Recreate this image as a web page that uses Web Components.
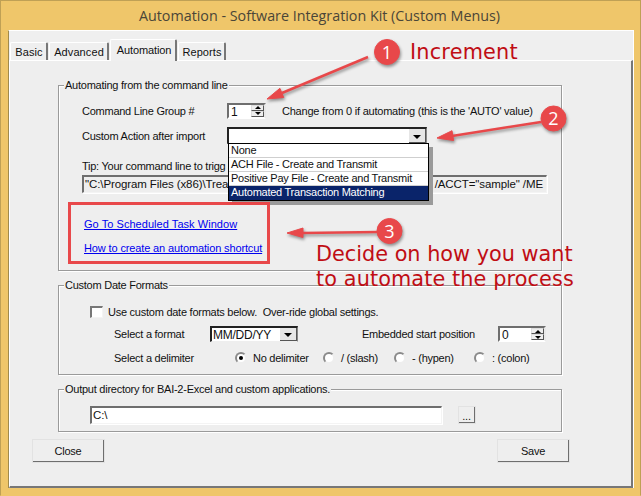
<!DOCTYPE html>
<html>
<head>
<meta charset="utf-8">
<title>Automation</title>
<style>
  html, body { margin: 0; padding: 0; background: #efc66a; }
  body { font: 11px "Liberation Sans", Arial, sans-serif; color: #111; letter-spacing: -.25px; }
</style>
</head>
<body>

<automation-dialog>
  <win-tab slot="tabs" style="width:38px">Basic</win-tab>
  <win-tab slot="tabs" style="width:60px">Advanced</win-tab>
  <win-tab slot="tabs" selected style="width:67px">Automation</win-tab>
  <win-tab slot="tabs" style="width:48px">Reports</win-tab>

  <win-group label="Automating from the command line" style="height:186px">
    <command-line-panel></command-line-panel>
  </win-group>
  <win-group label="Custom Date Formats" style="height:90px;margin-top:14px">
    <date-format-panel></date-format-panel>
  </win-group>
  <win-group label="Output directory for BAI-2-Excel and custom applications." style="height:43px;margin-top:14px">
    <output-panel></output-panel>
  </win-group>
  <dialog-footer></dialog-footer>
</automation-dialog>

<script>
class WinTab extends HTMLElement {
  constructor() {
    super();
    this.attachShadow({ mode: 'open' }).innerHTML = `
    <style>
    :host {
      display: block;
      box-sizing: border-box;
      height: 18px;
      margin: 3px 1px 0 0;
      padding-left: 1px;
      line-height: 18px;
      text-align: center;
      background: #efefef;
      border-top: 1px solid #fff;
      border-left: 1px solid #fff;
      border-right: 2px solid #777;
      border-radius: 2px 2px 0 0;
      white-space: nowrap;
      letter-spacing: .1px;
    }
    :host([selected]) {
      height: 22px;
      margin: 0 1px -1px 0;
      padding-left: 2px;
      position: relative;
      line-height: 20px;
      letter-spacing: -.1px;
    }
    </style>
    <slot></slot>`;
  }
}

class WinGroup extends HTMLElement {
  constructor() {
    super();
    this.attachShadow({ mode: 'open' }).innerHTML = `
    <style>
    :host {
      display: block;
      box-sizing: border-box;
      width: 504px;
      border: 1px solid #9a9a9a;
      box-shadow: 1px 1px 0 #fff, inset 1px 1px 0 #fff;
    }
    .legend {
      width: fit-content;
      height: 14px;
      line-height: 14px;
      margin: -8px 0 0 5px;
      padding: 0 1px;
      background: #eee;
      white-space: nowrap;
    }
    </style>
    <div class="legend">${this.getAttribute('label')}</div>
    <slot></slot>`;
  }
}

class WinSpinner extends HTMLElement {
  constructor() {
    super();
    this.attachShadow({ mode: 'open' }).innerHTML = `
    <style>
    :host {
      display: flex;
      box-sizing: border-box;
      height: 16px;
      background: #fff;
      border: 2px solid #6e6e6e;
      border-right-color: #e8e8e8;
      border-bottom-color: #fff;
      line-height: 14px;
      font-size: 12px;
    }
    .val { flex: 1; padding-left: 2px; }
    .btns { display: flex; flex-direction: column; width: 13px; }
    .btn {
      flex: 1;
      display: flex;
      align-items: center;
      justify-content: center;
      background: #eee;
      border: 1px solid #555;
      border-top-color: #ddd;
      border-left-color: #ddd;
      box-sizing: border-box;
    }
    .up { width: 0; height: 0; border: 3px solid transparent; border-top: 0; border-bottom-color: #000; }
    .down { width: 0; height: 0; border: 3px solid transparent; border-bottom: 0; border-top-color: #000; }
    </style>
    <div class="val"><slot></slot></div>
    <div class="btns">
      <div class="btn"><i class="up"></i></div>
      <div class="btn"><i class="down"></i></div>
    </div>`;
  }
}

class WinCombo extends HTMLElement {
  constructor() {
    super();
    this.attachShadow({ mode: 'open' }).innerHTML = `
    <style>
    :host {
      display: flex;
      position: relative;
      box-sizing: border-box;
      height: 17px;
      background: #fff;
      border: 1px solid #222;
      border-top-width: 2px;
      border-left-width: 2px;
      border-right-color: #888;
      border-bottom-color: #eee;
      font-size: 12px;
      line-height: 14px;
    }
    .val { flex: 1; padding-left: 1px; white-space: nowrap; }
    .btn {
      width: 17px;
      display: flex;
      align-items: center;
      justify-content: center;
      background: #e6e6e6;
      border-right: 1px solid #555;
      border-bottom: 1px solid #555;
      box-sizing: border-box;
    }
    .btn i { width: 0; height: 0; margin-top: 2px; border: 4px solid transparent; border-bottom: 0; border-top-color: #000; }
    ::slotted([slot=list]) { position: absolute; z-index: 2; left: -1px; top: 14px; }
    </style>
    <div class="val"><slot></slot></div>
    <div class="btn"><i></i></div>
    <slot name="list"></slot>`;
  }
}

class WinDropdown extends HTMLElement {
  constructor() {
    super();
    this.attachShadow({ mode: 'open' }).innerHTML = `
    <style>
    :host {
      display: block;
      box-sizing: border-box;
      width: 201px;
      height: 58px;
      background: #fff;
      border: 1px solid #000;
      box-shadow: 4px 4px 0 #9a9a9a;
      font-size: 11px;
    }
    ::slotted(div) {
      box-sizing: border-box;
      height: 14px;
      line-height: 13px;
      padding-left: 2px;
      border-bottom: 1px solid #cfcfcf;
      color: #111;
      white-space: nowrap;
    }
    ::slotted(div.on) { background: #0a246a; color: #fff; border-bottom: 0; }
    </style>
    <slot></slot>`;
  }
}

class WinInput extends HTMLElement {
  constructor() {
    super();
    this.attachShadow({ mode: 'open' }).innerHTML = `
    <style>
    :host {
      display: flex;
      justify-content: space-between;
      box-sizing: border-box;
      height: 18px;
      padding: 0 3px 0 1px;
      line-height: 14px;
      background: #fff;
      border: 2px solid #6e6e6e;
      border-right: 1px solid #f4f4f4;
      border-bottom: 1px solid #f4f4f4;
      box-shadow: 1px 1px 0 #fff;
      font-size: 11.5px;
      letter-spacing: -.1px;
      white-space: nowrap;
      overflow: hidden;
    }
    :host([readonly]) { background: #eee; }
    </style>
    <slot></slot>`;
  }
}

class WinButton extends HTMLElement {
  constructor() {
    super();
    this.attachShadow({ mode: 'open' }).innerHTML = `
    <style>
    :host {
      display: flex;
      align-items: center;
      justify-content: center;
      box-sizing: border-box;
      width: 73px;
      height: 24px;
      padding-top: 1px;
      background: #eee;
      border: 1px solid #fff;
      border-right: 2px solid #6e6e6e;
      border-bottom: 2px solid #6e6e6e;
      outline: 1px solid #e2e2e2;
      outline-offset: -1px;
    }
    </style>
    <slot></slot>`;
  }
}

class WinCheck extends HTMLElement {
  constructor() {
    super();
    this.attachShadow({ mode: 'open' }).innerHTML = `
    <style>
    :host { display: flex; align-items: center; gap: 5px; white-space: nowrap; }
    .box {
      box-sizing: border-box;
      width: 13px;
      height: 12px;
      background: #fff;
      border: 1px solid #f4f4f4;
      border-top: 2px solid #777;
      border-left: 2px solid #777;
    }
    </style>
    <div class="box"></div>
    <slot></slot>`;
  }
}

class WinRadio extends HTMLElement {
  constructor() {
    super();
    this.attachShadow({ mode: 'open' }).innerHTML = `
    <style>
    :host { display: flex; align-items: center; gap: 6px; white-space: nowrap; }
    .dot {
      box-sizing: border-box;
      width: 12px;
      height: 12px;
      border-radius: 50%;
      background: #fff;
      border: 2px solid #8a8a8a;
      border-right-color: #eee;
      border-bottom-color: #eee;
      display: flex;
      align-items: center;
      justify-content: center;
    }
    :host([checked]) .dot::after {
      content: "";
      width: 4px;
      height: 4px;
      border-radius: 50%;
      background: #000;
    }
    </style>
    <div class="dot"></div>
    <slot></slot>`;
  }
}

class CommandLinePanel extends HTMLElement {
  constructor() {
    super();
    this.attachShadow({ mode: 'open' }).innerHTML = `
    <style>
    :host { display: block; padding: 10px 0 0 23px; }
    .row { display: flex; align-items: center; height: 17px; margin-bottom: 8px; white-space: nowrap; }
    .lbl { width: 145px; flex: none; }
    win-spinner { width: 39px; }
    .hint { margin-left: 16px; letter-spacing: -.22px; }
    win-combo { width: 200px; }
    .tip { height: 14px; line-height: 14px; margin-top: 15px; }
    win-input { width: 465px; margin-top: 2px; }
    .links { display: flex; flex-direction: column; gap: 10px; margin: 24px 0 0 2px; letter-spacing: -.13px; }
    a { color: #0000ee; text-decoration: underline; height: 14px; line-height: 14px; width: fit-content; }
    a:first-child { letter-spacing: .05px; }
    </style>
    <div class="row"><span class="lbl">Command Line Group #</span>
      <win-spinner>1</win-spinner>
      <span class="hint">Change from 0 if automating (this is the 'AUTO' value)</span>
    </div>
    <div class="row"><span class="lbl">Custom Action after import</span>
      <win-combo>
        <win-dropdown slot="list">
          <div>None</div>
          <div>ACH File - Create and Transmit</div>
          <div>Positive Pay File - Create and Transmit</div>
          <div class="on">Automated Transaction Matching</div>
        </win-dropdown>
      </win-combo>
    </div>
    <div class="tip">Tip: Your command line to trigg</div>
    <win-input readonly><span>"C:\\Program Files (x86)\\Treas</span><span>" /ACCT="sample" /ME</span></win-input>
    <div class="links">
      <a href="#">Go To Scheduled Task Window</a>
      <a href="#">How to create an automation shortcut</a>
    </div>`;
  }
}

class DateFormatPanel extends HTMLElement {
  constructor() {
    super();
    this.attachShadow({ mode: 'open' }).innerHTML = `
    <style>
    :host { display: block; padding: 13px 0 0 31px; }
    win-check { height: 14px; }
    .row { display: flex; align-items: center; white-space: nowrap; }
    .fmt { height: 16px; margin: 7px 0 0 24px; }
    .fmt .lbl { width: 96px; }
    win-combo { width: 88px; height: 16px; }
    .pos { margin-left: 64px; width: 136px; }
    win-spinner { width: 48px; }
    .delim { height: 14px; margin: 9px 0 0 24px; }
    .delim .lbl { width: 121px; }
    </style>
    <win-check>Use custom date formats below.&nbsp; Over-ride global settings.</win-check>
    <div class="row fmt">
      <span class="lbl">Select a format</span>
      <win-combo>MM/DD/YY</win-combo>
      <span class="pos">Embedded start position</span>
      <win-spinner>0</win-spinner>
    </div>
    <div class="row delim">
      <span class="lbl">Select a delimiter</span>
      <win-radio checked style="width:88px">No delimiter</win-radio>
      <win-radio style="width:71px">/ (slash)</win-radio>
      <win-radio style="width:80px">- (hypen)</win-radio>
      <win-radio>: (colon)</win-radio>
    </div>`;
  }
}

class OutputPanel extends HTMLElement {
  constructor() {
    super();
    this.attachShadow({ mode: 'open' }).innerHTML = `
    <style>
    :host { display: flex; gap: 16px; padding: 10px 0 0 31px; }
    win-input { width: 352px; }
    win-button { width: 18px; height: 18px; padding-top: 2px; }
    </style>
    <win-input>C:\\</win-input>
    <win-button>...</win-button>`;
  }
}

class DialogFooter extends HTMLElement {
  constructor() {
    super();
    this.attachShadow({ mode: 'open' }).innerHTML = `
    <style>
    :host { display: flex; justify-content: space-between; width: 538px; margin: 7px 0 0 -26px; }
    </style>
    <win-button>Close</win-button>
    <win-button>Save</win-button>`;
  }
}

// red notes drawn on top of the dialog
class CalloutLayer extends HTMLElement {
  constructor() {
    super();
    this.attachShadow({ mode: 'open' }).innerHTML = `
    <style>
    :host { position: absolute; left: -1px; top: -1px; width: 641px; height: 496px; z-index: 5; pointer-events: none; letter-spacing: 0; }
    svg { position: absolute; left: 0; top: 0; }
    .shadow { filter: drop-shadow(1px 2px 1.5px rgba(0,0,0,.4)); }
    .num { font: 18px "Open Sans", sans-serif; fill: #fff; text-anchor: middle; }
    .note {
      position: absolute;
      font: 20.8px/27px "DejaVu Sans", Verdana, sans-serif;
      color: #c00d14;
      white-space: nowrap;
    }
    </style>
    <svg width="641" height="496" viewBox="0 0 641 496">
      <g class="shadow" fill="#e8484a" stroke="#e8484a" stroke-linejoin="round">
        <line x1="368" y1="57" x2="282" y2="93" stroke-width="2.5"/>
        <polygon points="267,99 283.7,97.5 279.9,88.3" stroke-width="1"/>
        <line x1="541" y1="122" x2="452" y2="136" stroke-width="2.5"/>
        <polygon points="437,138 453.6,140.5 452,130.7" stroke-width="1"/>
        <line x1="378" y1="232" x2="303" y2="233" stroke-width="2.5"/>
        <polygon points="287,233 303,237.5 303,228" stroke-width="1"/>
        <circle cx="387" cy="52" r="12.5"/>
        <circle cx="553.5" cy="118.5" r="12.5"/>
        <circle cx="389.5" cy="231" r="12.5"/>
      </g>
      <rect x="69.5" y="203.5" width="199" height="59" fill="none" stroke="#e8484a" stroke-width="3"/>
      <text class="num" x="387" y="58.5">1</text>
      <text class="num" x="553.5" y="125">2</text>
      <text class="num" x="389.5" y="237.5">3</text>
    </svg>
    <div class="note" style="left:410px;top:39px;letter-spacing:.2px">Increment</div>
    <div class="note" style="left:316px;top:241px">Decide on how you want</div>
    <div class="note" style="left:316px;top:266px;letter-spacing:.1px">to automate the process</div>`;
  }
}

class AutomationDialog extends HTMLElement {
  constructor() {
    super();
    this.attachShadow({ mode: 'open' }).innerHTML = `
    <style>
    :host {
      display: flex;
      flex-direction: column;
      position: relative;
      box-sizing: border-box;
      width: 641px;
      height: 496px;
      padding: 0 6px 7px 7px;
      background: #efc66a;
      border: 1px solid #bfa055;
      border-bottom-color: #efc66a;
      overflow: hidden;
    }
    .title {
      flex: none;
      height: 29px;
      padding-right: 3px;
      text-align: center;
      font: 14.3px/30px "Open Sans", "Noto Sans", sans-serif;
      letter-spacing: 0;
      color: #4a4538;
    }
    .panel {
      flex: 1;
      display: flex;
      flex-direction: column;
      background: #efefef;
      border: 1px solid #a08a4c;
      border-top-color: #fff;
      border-right-color: #fff;
      border-bottom: 0;
    }
    .tabs { display: flex; align-items: flex-end; height: 22px; margin: 7px 0 0 1px; }
    .page {
      flex: 1;
      padding: 24px 0 0 48px;
      background: #eee;
      border-top: 1px solid #fff;
      border-left: 1px solid #fff;
      border-right: 2px solid #777;
      border-bottom: 2px solid #777;
    }
    </style>
    <div class="title">Automation - Software Integration Kit (Custom Menus)</div>
    <div class="panel">
      <div class="tabs"><slot name="tabs"></slot></div>
      <div class="page"><slot></slot></div>
    </div>
    <callout-layer></callout-layer>`;
  }
}

customElements.define("win-tab", WinTab);
customElements.define("win-group", WinGroup);
customElements.define("win-spinner", WinSpinner);
customElements.define("win-combo", WinCombo);
customElements.define("win-dropdown", WinDropdown);
customElements.define("win-input", WinInput);
customElements.define("win-button", WinButton);
customElements.define("win-check", WinCheck);
customElements.define("win-radio", WinRadio);
customElements.define("command-line-panel", CommandLinePanel);
customElements.define("date-format-panel", DateFormatPanel);
customElements.define("output-panel", OutputPanel);
customElements.define("dialog-footer", DialogFooter);
customElements.define("callout-layer", CalloutLayer);
customElements.define("automation-dialog", AutomationDialog);
</script>
</body>
</html>
